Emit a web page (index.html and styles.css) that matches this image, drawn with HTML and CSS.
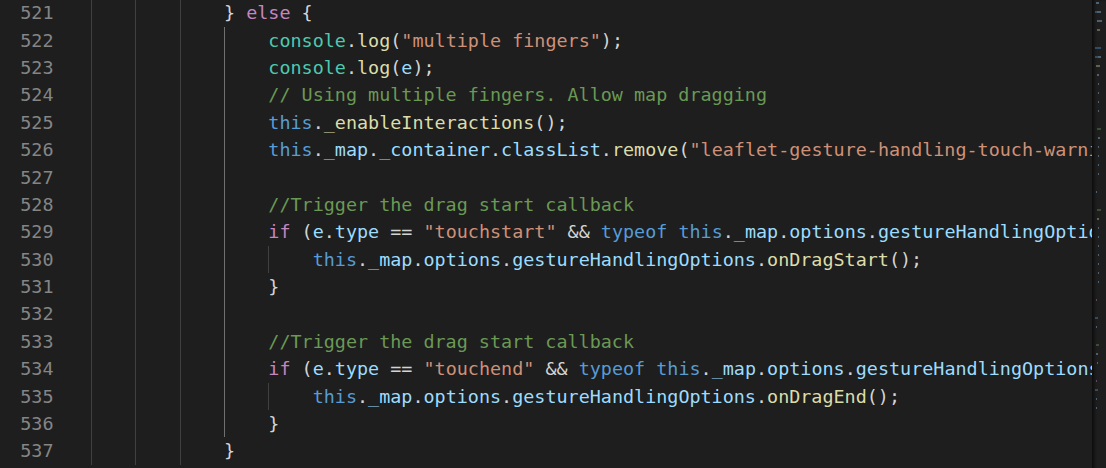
FILE: index.html
```html
<!DOCTYPE html>
<html>
<head>
<meta charset="utf-8">
<link rel="stylesheet" href="styles.css">
</head>
<body>
<div class="editor">
  <div class="code">
    <div class="line"><span class="ln">521</span><span class="src"><span class="g">    </span><span class="g">    </span><span class="g">    </span>} <span class="k">else</span> {</span></div>
    <div class="line"><span class="ln">522</span><span class="src"><span class="g">    </span><span class="g">    </span><span class="g">    </span><span class="g a">    </span><span class="t">console</span>.<span class="f">log</span>(<span class="s">"multiple fingers"</span>);</span></div>
    <div class="line"><span class="ln">523</span><span class="src"><span class="g">    </span><span class="g">    </span><span class="g">    </span><span class="g a">    </span><span class="t">console</span>.<span class="f">log</span>(<span class="v">e</span>);</span></div>
    <div class="line"><span class="ln">524</span><span class="src"><span class="g">    </span><span class="g">    </span><span class="g">    </span><span class="g a">    </span><span class="c">// Using multiple fingers. Allow map dragging</span></span></div>
    <div class="line"><span class="ln">525</span><span class="src"><span class="g">    </span><span class="g">    </span><span class="g">    </span><span class="g a">    </span><span class="b">this</span>.<span class="f">_enableInteractions</span>();</span></div>
    <div class="line"><span class="ln">526</span><span class="src"><span class="g">    </span><span class="g">    </span><span class="g">    </span><span class="g a">    </span><span class="b">this</span>.<span class="v">_map</span>.<span class="v">_container</span>.<span class="v">classList</span>.<span class="f">remove</span>(<span class="s">"leaflet-gesture-handling-touch-warning"</span>);</span></div>
    <div class="line"><span class="ln">527</span><span class="src"><span class="g">    </span><span class="g">    </span><span class="g">    </span><span class="g a">    </span></span></div>
    <div class="line"><span class="ln">528</span><span class="src"><span class="g">    </span><span class="g">    </span><span class="g">    </span><span class="g a">    </span><span class="c">//Trigger the drag start callback</span></span></div>
    <div class="line"><span class="ln">529</span><span class="src"><span class="g">    </span><span class="g">    </span><span class="g">    </span><span class="g a">    </span><span class="k">if</span> (<span class="v">e</span>.<span class="v">type</span> == <span class="s">"touchstart"</span> &amp;&amp; <span class="b">typeof</span> <span class="b">this</span>.<span class="v">_map</span>.<span class="v">options</span>.<span class="v">gestureHandlingOptions</span>.<span class="v">onDragStart</span> === <span class="s">"function"</span>) {</span></div>
    <div class="line"><span class="ln">530</span><span class="src"><span class="g">    </span><span class="g">    </span><span class="g">    </span><span class="g a">    </span><span class="g">    </span><span class="b">this</span>.<span class="v">_map</span>.<span class="v">options</span>.<span class="v">gestureHandlingOptions</span>.<span class="f">onDragStart</span>();</span></div>
    <div class="line"><span class="ln">531</span><span class="src"><span class="g">    </span><span class="g">    </span><span class="g">    </span><span class="g a">    </span>}</span></div>
    <div class="line"><span class="ln">532</span><span class="src"><span class="g">    </span><span class="g">    </span><span class="g">    </span><span class="g a">    </span></span></div>
    <div class="line"><span class="ln">533</span><span class="src"><span class="g">    </span><span class="g">    </span><span class="g">    </span><span class="g a">    </span><span class="c">//Trigger the drag start callback</span></span></div>
    <div class="line"><span class="ln">534</span><span class="src"><span class="g">    </span><span class="g">    </span><span class="g">    </span><span class="g a">    </span><span class="k">if</span> (<span class="v">e</span>.<span class="v">type</span> == <span class="s">"touchend"</span> &amp;&amp; <span class="b">typeof</span> <span class="b">this</span>.<span class="v">_map</span>.<span class="v">options</span>.<span class="v">gestureHandlingOptions</span>.<span class="v">onDragEnd</span> === <span class="s">"function"</span>) {</span></div>
    <div class="line"><span class="ln">535</span><span class="src"><span class="g">    </span><span class="g">    </span><span class="g">    </span><span class="g a">    </span><span class="g">    </span><span class="b">this</span>.<span class="v">_map</span>.<span class="v">options</span>.<span class="v">gestureHandlingOptions</span>.<span class="f">onDragEnd</span>();</span></div>
    <div class="line"><span class="ln">536</span><span class="src"><span class="g">    </span><span class="g">    </span><span class="g">    </span><span class="g a">    </span>}</span></div>
    <div class="line"><span class="ln">537</span><span class="src"><span class="g">    </span><span class="g">    </span><span class="g">    </span>}</span></div>
  </div>
  <div class="minimap">
    <div class="mrow"><i class="mv" style="margin-left:4px;width:3px"></i></div>
    <div class="mrow"><i class="mb" style="margin-left:3px;width:2px"></i><i class="mv" style="width:4px"></i></div>
    <div class="mrow"><i class="mv" style="margin-left:5px;width:5px"></i></div>
    <div class="mrow"><i class="mf" style="margin-left:5px;width:3px"></i></div>
    <div class="mrow"></div>
    <div class="mrow"><i class="mb" style="margin-left:3px;width:6px"></i></div>
    <div class="mrow"><i class="mb" style="margin-left:3px;width:3px"></i><i class="mv" style="width:3px"></i></div>
    <div class="mrow"><i class="mf" style="margin-left:4px;width:4px"></i></div>
    <div class="mrow"><i class="mv" style="margin-left:5px;width:2px"></i></div>
    <div class="mrow"><i class="mv" style="margin-left:6px;width:1px"></i></div>
    <div class="mrow"><i class="mv" style="margin-left:6px;width:1px"></i></div>
    <div class="mrow"><i class="mv" style="margin-left:6px;width:1px"></i></div>
    <div class="mrow"><i class="mv" style="margin-left:6px;width:1px"></i></div>
    <div class="mrow"></div>
    <div class="mrow"><i class="mc" style="margin-left:5px;width:4px"></i></div>
    <div class="mrow"><i class="mv" style="margin-left:6px;width:2px"></i></div>
    <div class="mrow"><i class="mv" style="margin-left:6px;width:1px"></i></div>
    <div class="mrow"><i class="mv" style="margin-left:6px;width:1px"></i></div>
    <div class="mrow"><i class="mv" style="margin-left:6px;width:1px"></i></div>
    <div class="mrow"><i class="mv" style="margin-left:6px;width:1px"></i></div>
    <div class="mrow"></div>
    <div class="mrow"><i class="mv" style="margin-left:4px;width:1px"></i></div>
    <div class="mrow"></div>
    <div class="mrow"><i class="mc" style="margin-left:5px;width:4px"></i></div>
    <div class="mrow"><i class="mf" style="margin-left:5px;width:2px"></i></div>
    <div class="mrow"><i class="mv" style="margin-left:6px;width:1px"></i></div>
    <div class="mrow"><i class="mv" style="margin-left:6px;width:1px"></i></div>
    <div class="mrow"><i class="mv" style="margin-left:6px;width:1px"></i></div>
    <div class="mrow"><i class="mv" style="margin-left:6px;width:1px"></i></div>
    <div class="mrow"><i class="mv" style="margin-left:6px;width:1px"></i></div>
    <div class="mrow"><i class="mv" style="margin-left:6px;width:1px"></i></div>
    <div class="mrow"><i class="mv" style="margin-left:6px;width:1px"></i></div>
    <div class="mrow"></div>
    <div class="mrow"><i class="mp" style="margin-left:4px;width:1px"></i></div>
    <div class="mrow"></div>
    <div class="mrow"><i class="mb" style="margin-left:3px;width:3px"></i></div>
    <div class="mrow"><i class="mv" style="margin-left:4px;width:1px"></i></div>
    <div class="mrow"></div>
    <div class="mrow"><i class="mc" style="margin-left:4px;width:3px"></i></div>
    <div class="mrow"><i class="mv" style="margin-left:4px;width:2px"></i></div>
    <div class="mrow"><i class="mv" style="margin-left:5px;width:1px"></i></div>
    <div class="mrow"></div>
    <div class="mrow"><i class="mp" style="margin-left:4px;width:1px"></i></div>
    <div class="mrow"><i class="mb" style="margin-left:3px;width:3px"></i></div>
    <div class="mrow"><i class="mv" style="margin-left:4px;width:1px"></i></div>
    <div class="mrow"><i class="mv" style="margin-left:4px;width:1px"></i></div>
  </div>
</div>
</body>
</html>
```
FILE: styles.css
```css
html, body {
  margin: 0;
  padding: 0;
  background: #1e1e1e;
  overflow: hidden;
  width: 1106px;
  height: 468px;
}

.editor {
  display: flex;
  width: 1106px;
  height: 468px;
  background: #1e1e1e;
}

.code {
  flex: 1;
  overflow: hidden;
  margin-top: -0.7px;
  font-family: "DejaVu Sans Mono", "Liberation Mono", monospace;
  font-size: 18.42px;
  line-height: 27.375px;
  font-variant-ligatures: none;
  color: #d4d4d4;
}

.line {
  display: flex;
  height: 27.375px;
  white-space: pre;
}

.ln {
  flex: none;
  width: 53.5px;
  padding-right: 37.5px;
  text-align: right;
  color: #858585;
}

.src {
  flex: none;
  white-space: pre;
}

.g {
  display: inline-block;
  height: 27.375px;
  vertical-align: top;
  box-shadow: inset 1px 0 0 #404040;
}

.g.a {
  box-shadow: inset 1px 0 0 #707070;
}

.k { color: #c586c0; }
.b { color: #569cd6; }
.v { color: #9cdcfe; }
.f { color: #dcdcaa; }
.t { color: #4ec9b0; }
.s { color: #ce9178; }
.c { color: #6a9955; }

.minimap {
  flex: none;
  width: 14px;
  height: 468px;
  background: #1e1e1e;
  box-shadow: inset 3px 0 3px -1px #0c0c0c;
  display: flex;
  flex-direction: column;
  padding-top: 2px;
  gap: 7px;
  overflow: hidden;
}

.mrow {
  display: flex;
  height: 2px;
  flex: none;
}

.mrow i {
  display: block;
  height: 2px;
  opacity: 0.6;
}

.mv { background: #6f8ea3; }
.mb { background: #3f6a93; }
.mf { background: #8f8f70; }
.mc { background: #4f6e43; }
.mp { background: #8a6a88; }
```
